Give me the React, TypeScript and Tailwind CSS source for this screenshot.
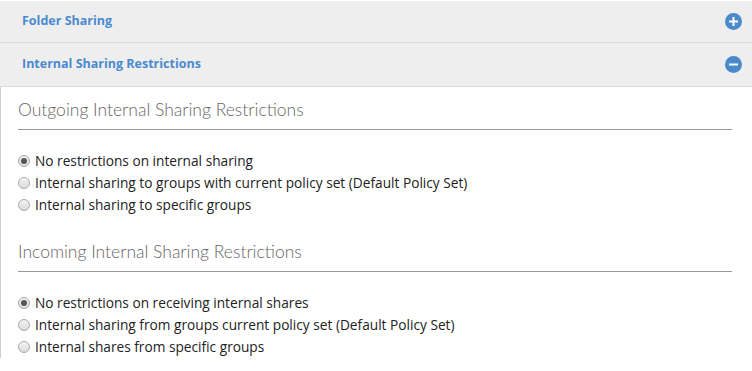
import React from 'react';

const font = { fontFamily: '"Open Sans", "Noto Sans", sans-serif' };
const headingFont = { fontFamily: 'Lato, "Open Sans", sans-serif' };

const ToggleIcon: React.FC<{ open: boolean }> = ({ open }) => (
  <svg width="17" height="17" viewBox="0 0 17 17">
    <circle cx="8.5" cy="8.5" r="8.5" fill="#4a8acb" />
    <path d="M4 8.5h9" stroke="#fff" strokeWidth="2" />
    {!open && <path d="M8.5 4v9" stroke="#fff" strokeWidth="2" />}
  </svg>
);

const Header: React.FC<{ title: string; open: boolean; tall?: boolean }> = ({ title, open, tall }) => (
  <div
    className={`flex items-center justify-between border-b border-[#dadada] bg-[#eeeeee] pl-[22px] pr-[10px] ${
      tall ? 'h-[44px]' : 'h-[42px]'
    }`}
  >
    <span className="text-[12.5px] font-bold text-[#4a8ad0]">{title}</span>
    <ToggleIcon open={open} />
  </div>
);

const Radio: React.FC<{ checked?: boolean; label: string }> = ({ checked, label }) => (
  <label className="flex h-[22px] items-center gap-[5px]">
    <span className="flex h-[12px] w-[12px] items-center justify-center rounded-full border border-[#a8a8a8] bg-gradient-to-b from-[#f4f4f4] to-[#dcdcdc]">
      {checked && <span className="h-[6px] w-[6px] rounded-full bg-[#555]" />}
    </span>
    <span className="text-[13.7px] text-[#222]">{label}</span>
  </label>
);

const Section: React.FC<{ title: string; options: string[] }> = ({ title, options }) => (
  <div className="pr-[20px]">
    <div
      className="border-b border-[#999] pb-[7px] text-[17.5px] leading-[24px] font-light text-[#666]"
      style={headingFont}
    >
      {title}
    </div>
    <div className="mt-[20px] flex flex-col">
      {options.map((o, i) => (
        <Radio key={o} label={o} checked={i === 0} />
      ))}
    </div>
  </div>
);

export default function App() {
  return (
    <div className="h-[371px] w-[752px] overflow-hidden bg-white pt-[1px]" style={font}>
      <Header title="Folder Sharing" open={false} />
      <Header title="Internal Sharing Restrictions" open={true} tall />
      <div className="flex flex-col gap-[24px] border-l border-[#cfcfcf] pl-[17px] pt-[11px]">
        <Section
          title="Outgoing Internal Sharing Restrictions"
          options={[
            'No restrictions on internal sharing',
            'Internal sharing to groups with current policy set (Default Policy Set)',
            'Internal sharing to specific groups',
          ]}
        />
        <Section
          title="Incoming Internal Sharing Restrictions"
          options={[
            'No restrictions on receiving internal shares',
            'Internal sharing from groups current policy set (Default Policy Set)',
            'Internal shares from specific groups',
          ]}
        />
      </div>
    </div>
  );
}
